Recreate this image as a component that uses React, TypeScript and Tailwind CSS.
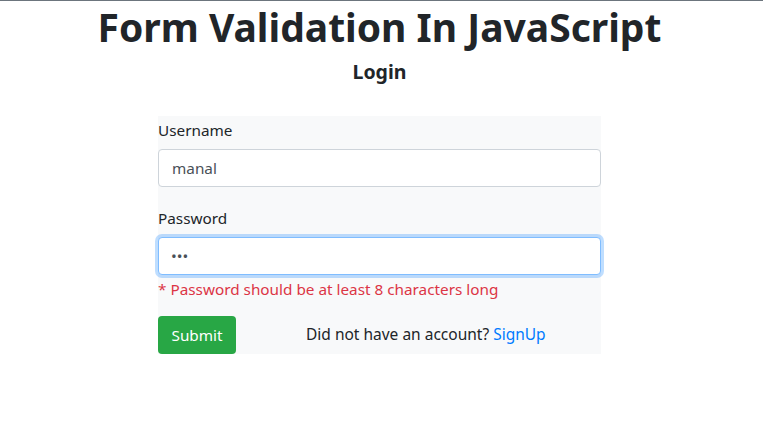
import { useState } from 'react';

const App = () => {
  const [username, setUsername] = useState('manal');
  const [password, setPassword] = useState('123');

  return (
    <div className="min-h-screen bg-white border-t border-[#6c757d] text-[#212529]" style={{ fontFamily: '"Noto Sans", "Open Sans", sans-serif' }}>
      <div className="w-[759px] flex flex-col items-center">
        <h1 className="text-[39px] font-bold leading-[50px] mt-[1px]">Form Validation In JavaScript</h1>
        <h5 className="text-[19.5px] font-bold leading-[24px] mt-[8px]">Login</h5>

        <form className="w-[443px] bg-[#f8f9fa] mt-[32px] flex flex-col text-[15.3px]" onSubmit={(e) => e.preventDefault()}>
          <label className="leading-[24px] mt-[2px]">Username</label>
          <input
            className="mt-[7px] h-[38px] w-full rounded-[4px] border border-[#ced4da] bg-white px-[13px] text-[#495057] outline-none"
            value={username}
            onChange={(e) => setUsername(e.target.value)}
          />
          <label className="leading-[24px] mt-[19px]">Password</label>
          <input
            type="password"
            className="mt-[7px] h-[38px] w-full rounded-[4px] border border-[#80bdff] bg-white px-[12px] text-[#495057] outline-none shadow-[0_0_0_3px_rgba(0,123,255,0.25)]"
            value={password}
            onChange={(e) => setPassword(e.target.value)}
          />
          <small className="text-[15.3px] leading-[24px] text-[#dc3545] mt-[2px]">* Password should be at least 8 characters long</small>

          <div className="flex items-center mt-[15px]">
            <button type="submit" className="h-[38px] w-[78px] rounded-[4px] bg-[#28a745] text-white">Submit</button>
            <span className="ml-[70px] text-[15.5px]">
              Did not have an account? <a href="#" className="text-[#007bff]">SignUp</a>
            </span>
          </div>
        </form>
      </div>
    </div>
  );
};

export default App;
